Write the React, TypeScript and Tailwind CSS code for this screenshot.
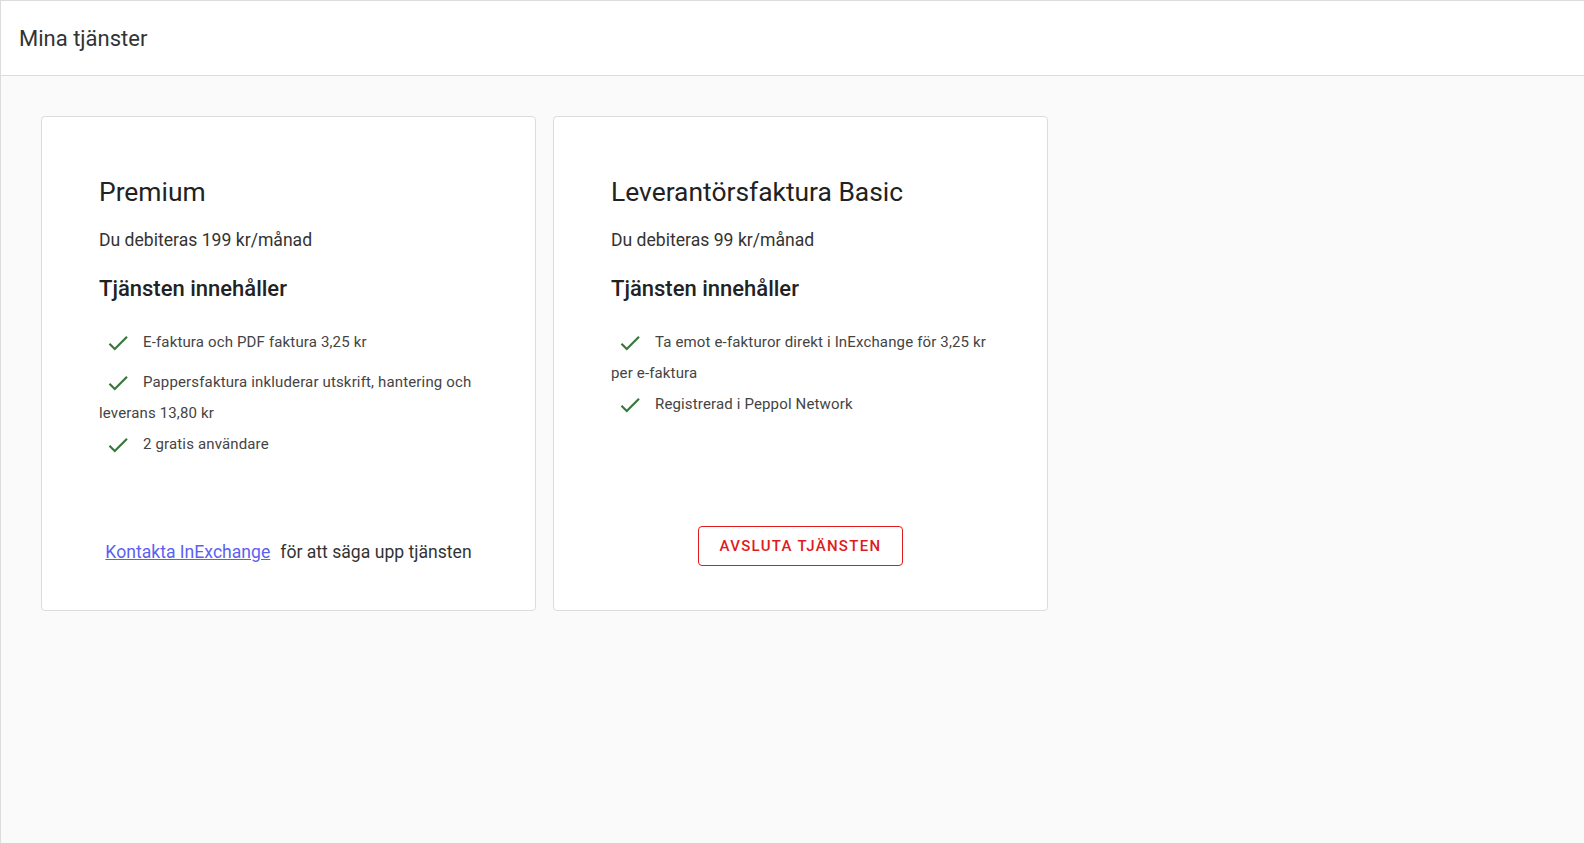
import React from 'react';

const font = { fontFamily: 'Roboto, "Noto Sans", Arial, sans-serif' };

function CheckIcon() {
  return (
    <svg
      viewBox="0 0 24 24"
      className="inline-block w-[26px] h-[26px] align-middle ml-[6px] mr-[12px] fill-[#37783a]"
    >
      <path d="M9 16.17 4.83 12l-1.42 1.41L9 19 21 7l-1.41-1.41z" />
    </svg>
  );
}

type Service = {
  name: string;
  price: string;
  features: string[];
  firstGap?: boolean;
  footer: React.ReactNode;
};

function ServiceCard({ service }: { service: Service }) {
  return (
    <div className="w-[495px] h-[495px] flex flex-col bg-white border border-[#dcdcdc] rounded-[4px] pt-[59px] px-[57px]">
      <h2 className="text-[26.4px] leading-[32px] font-normal text-[#222]">{service.name}</h2>
      <p className="mt-[20px] text-[17.6px] leading-[24px] text-[#333]">{service.price}</p>
      <h3 className="mt-[23px] text-[22px] leading-[28px] font-medium text-[#222]">Tjänsten innehåller</h3>
      <div className="mt-[24px]">
        {service.features.map((f, i) => (
          <p
            key={f}
            className={`text-[15px] leading-[31px] tracking-[0.15px] text-[#444] ${
              i === 0 && service.firstGap ? 'mb-[9px]' : ''
            }`}
          >
            <CheckIcon />
            {f}
          </p>
        ))}
      </div>
      {service.footer}
    </div>
  );
}

const services: Service[] = [
  {
    name: 'Premium',
    price: 'Du debiteras 199 kr/månad',
    firstGap: true,
    features: [
      'E-faktura och PDF faktura 3,25 kr',
      'Pappersfaktura inkluderar utskrift, hantering och leverans 13,80 kr',
      '2 gratis användare',
    ],
    footer: (
      <p className="mt-auto mb-[46px] text-center text-[17.6px] leading-[24px] text-[#333]">
        <a href="#" className="text-[#5b5ff2] underline mr-[10px]">
          Kontakta InExchange
        </a>
        för att säga upp tjänsten
      </p>
    ),
  },
  {
    name: 'Leverantörsfaktura Basic',
    price: 'Du debiteras 99 kr/månad',
    features: [
      'Ta emot e-fakturor direkt i InExchange för 3,25 kr per e-faktura',
      'Registrerad i Peppol Network',
    ],
    footer: (
      <div className="mt-auto mb-[44px] flex justify-center">
        <button className="h-[40px] px-[21px] border border-[#e01b1b] rounded-[4px] text-[#e01b1b] text-[15px] font-medium uppercase tracking-[1.3px]">
          Avsluta tjänsten
        </button>
      </div>
    ),
  },
];

export default function App() {
  return (
    <div className="min-h-screen bg-[#fafafa] border-l border-t border-[#dcdcdc]" style={font}>
      {/* Header */}
      <div className="h-[75px] bg-white border-b border-[#dcdcdc] pt-[24px] pl-[18px]">
        <h1 className="text-[22px] leading-[28px] font-normal text-[#333]">Mina tjänster</h1>
      </div>

      {/* Cards */}
      <div className="flex gap-[17px] pt-[40px] pl-[40px]">
        {services.map((s) => (
          <ServiceCard key={s.name} service={s} />
        ))}
      </div>
    </div>
  );
}
